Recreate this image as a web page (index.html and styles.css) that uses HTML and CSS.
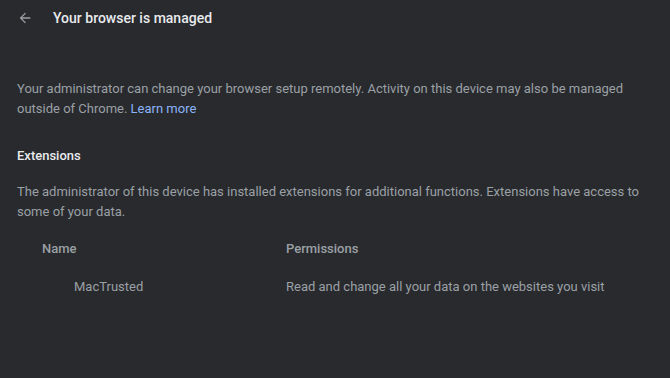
FILE: index.html
```html
<!DOCTYPE html>
<html>
	<head>
		<meta charset="UTF-8">
		<title>Your browser is managed</title>
		<link rel="stylesheet" href="styles.css">
	</head>
	<body>
		<div class="topbar">
			<span class="back">
				<svg width="16" height="16" viewBox="0 0 24 24"><path d="M20 11H7.83l5.59-5.59L12 4l-8 8 8 8 1.41-1.41L7.83 13H20v-2z" fill="#9aa0a6"/></svg>
			</span>
			<h1>Your browser is managed</h1>
		</div>
		<div class="main">
			<p class="intro">Your administrator can change your browser setup remotely. Activity on this device may also be managed outside of Chrome. <a href="#">Learn more</a></p>
			<h2>Extensions</h2>
			<p class="desc">The administrator of this device has installed extensions for additional functions. Extensions have access to some of your data.</p>
			<div class="table">
				<div class="row head">
					<span class="name">Name</span>
					<span class="perm">Permissions</span>
				</div>
				<div class="row">
					<span class="name ext">MacTrusted</span>
					<span class="perm">Read and change all your data on the websites you visit</span>
				</div>
			</div>
		</div>
	</body>
</html>
```

FILE: styles.css
```css
*{
	margin: 0;
	padding: 0;
	box-sizing: border-box;
}
body{
	background: #292a2d;
	font-family: Roboto, "Liberation Sans", sans-serif;
	font-size: 13px;
	color: #9aa0a6;
	height: 378px;
	overflow: hidden;
}
.topbar{
	height: 35px;
	display: flex;
	align-items: center;
	padding-left: 17px;
}
.back{
	width: 16px;
	height: 16px;
	display: flex;
	margin-right: 20px;
}
h1{
	font-size: 14px;
	font-weight: 500;
	color: #e8eaed;
}
.main{
	padding: 44px 17px 0;
}
.intro, .desc{
	line-height: 20px;
}
a{
	color: #8ab4f8;
	text-decoration: none;
}
h2{
	font-size: 13px;
	font-weight: 500;
	color: #e8eaed;
	margin-top: 27px;
	line-height: 20px;
}
.desc{
	margin-top: 16px;
}
.table{
	margin-top: 7px;
}
.row{
	display: flex;
	height: 38px;
	align-items: center;
}
.head{
	font-weight: 500;
}
.name{
	width: 269px;
	padding-left: 25px;
}
.ext{
	padding-left: 57px;
}
```
